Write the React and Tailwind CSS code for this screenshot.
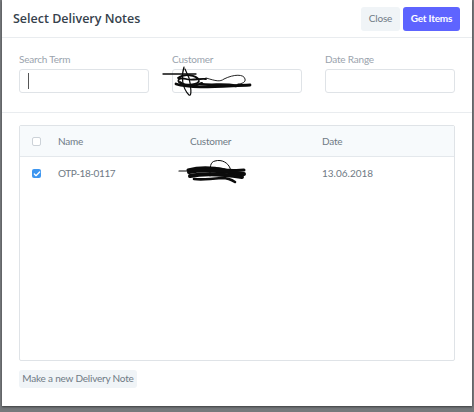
import React from "react";
import { Check } from "lucide-react";

// ---------- Marker scribbles over the customer names ----------
function ScribbleTop() {
  return (
    <svg width="90" height="34" viewBox="0 0 90 34" fill="none" stroke="#0b0b0b" strokeLinecap="round" strokeLinejoin="round" className="block">
      <path d="M1 8 H34" strokeWidth="1.3" />
      <path d="M22 1 C19 10 20 22 27 29 C30 31 29 20 27 12 L23 3" strokeWidth="1.2" />
      <path d="M16 12 C22 7 34 9 37 14 C38 19 24 20 18 17 C14 14 18 11 24 13 C30 15 38 12 44 13" strokeWidth="1.8" />
      <path d="M14 18 C30 23 60 20 88 19" strokeWidth="2.8" />
      <path d="M38 18 C50 20 62 17 74 20" strokeWidth="2.6" />
      <path d="M44 12 C54 15 58 16 62 13 C72 8 82 8 83 13 C84 16 80 18 76 18" strokeWidth="0.9" />
      <path d="M18 16 C26 22 34 20 40 17" strokeWidth="2" />
    </svg>
  );
}

function ScribbleRow() {
  return (
    <svg width="70" height="26" viewBox="0 0 70 26" fill="none" stroke="#0b0b0b" strokeLinecap="round" strokeLinejoin="round" className="block">
      <path d="M1 12 H12" strokeWidth="1.2" />
      <path d="M10 11 C24 7 38 9 47 11 C56 12 62 11 66 11" strokeWidth="3" />
      <path d="M11 13 C26 10 44 12 66 15" strokeWidth="4" />
      <path d="M12 17 C26 14 44 15 64 18" strokeWidth="4" />
      <path d="M16 20 C24 21 34 20 44 19 C50 19 54 21 57 23" strokeWidth="2.6" />
      <path d="M32 17 C32 8 32 3 37 2 C44 0 50 4 52 9 C53 12 53 15 52 17" strokeWidth="1" />
      <path d="M32 9 C38 8 46 9 54 12" strokeWidth="0.9" />
    </svg>
  );
}

// ---------- Filter Field ----------
function Field({ label, children }) {
  return (
    <div className="flex w-[130px] flex-col">
      <label className="h-[16px] text-[10px] leading-[16px] tracking-[-0.2px] text-[#9aa3ad]">{label}</label>
      <div className="relative mt-[2px] flex h-[24px] items-center rounded-[3px] border border-[#dfe3e7] bg-white pl-[8px]">
        {children}
      </div>
    </div>
  );
}

export default function App() {
  return (
    <div className="flex h-[412px] w-[474px] flex-col bg-[#76797c] font-['Lato','Open_Sans',sans-serif]">
      <div className="ml-[2px] mr-[2px] flex h-[406px] flex-col bg-white shadow-[0_1px_2px_rgba(0,0,0,0.5)]">
        {/* header */}
        <div className="flex h-[38px] shrink-0 items-center justify-between border-b border-[#e9ecef] pl-[11px] pr-[12px]">
          <h4 className="mt-[2px] font-['Open_Sans',sans-serif] text-[12.5px] font-semibold text-[#36414c]">Select Delivery Notes</h4>
          <div className="flex gap-[3px]">
            <button className="h-[24px] w-[39px] rounded-[3px] bg-[#f0f4f7] text-[10px] tracking-[-0.2px] text-[#6f7a85]">Close</button>
            <button className="h-[24px] w-[57px] rounded-[3px] bg-[#5e64ff] text-[10px] font-bold tracking-[-0.2px] text-white">Get Items</button>
          </div>
        </div>

        {/* filters */}
        <div className="flex h-[75px] shrink-0 gap-[23px] border-b border-[#e9ecef] pl-[17px] pt-[13px]">
          <Field label="Search Term">
            <span className="h-[16px] w-px bg-[#555]" />
          </Field>
          <Field label="Customer">
            <span className="absolute left-[-11px] top-[-4px]">
              <ScribbleTop />
            </span>
          </Field>
          <Field label="Date Range" />
        </div>

        {/* results */}
        <div className="flex flex-1 flex-col pl-[17px] pr-[17px] pt-[12px]">
          <div className="h-[236px] w-[436px] rounded-[2px] border border-[#dfe3e7]">
            <div className="flex h-[31px] items-center border-b border-[#e4e8ec] bg-[#f7fafc] text-[10px] tracking-[-0.2px] text-[#6f7a85]">
              <span className="ml-[12px] h-[9px] w-[9px] rounded-[2px] border border-[#ccd2d8] bg-white" />
              <span className="ml-[17px] w-[132px]">Name</span>
              <span className="w-[132px]">Customer</span>
              <span>Date</span>
            </div>
            <div className="flex h-[33px] items-center text-[10px] text-[#6f7a85]">
              <span className="ml-[12px] flex h-[9px] w-[9px] items-center justify-center rounded-[2px] bg-[#3d96f0]">
                <Check className="h-[8px] w-[8px] text-white" strokeWidth={4} />
              </span>
              <span className="ml-[17px] w-[132px] tracking-[-0.4px]">OTP-18-0117</span>
              <span className="relative w-[132px]">
                <span className="absolute left-[-12px] top-[-7px]">
                  <ScribbleRow />
                </span>
                &nbsp;
              </span>
              <span>13.06.2018</span>
            </div>
          </div>
          <button className="mt-[9px] h-[18px] w-[118px] whitespace-nowrap rounded-[3px] bg-[#f0f4f7] pb-[1px] text-[10px] tracking-[-0.2px] text-[#6f7a85]">
            Make a new Delivery Note
          </button>
        </div>
      </div>
    </div>
  );
}
